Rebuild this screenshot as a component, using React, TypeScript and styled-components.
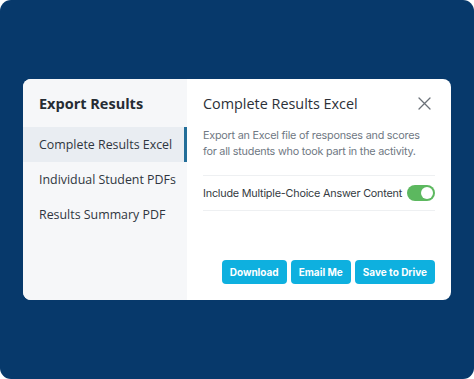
import React from "react";
import styled, { createGlobalStyle } from "styled-components";

const Global = createGlobalStyle`
  html, body { margin: 0; padding: 0; background: #ffffff; }
  * { box-sizing: border-box; }
`;

const Page = styled.div`
  width: 474px;
  height: 379px;
  background: #07396b;
  border-radius: 11px;
  display: flex;
  align-items: center;
  justify-content: center;
`;

const Card = styled.div`
  width: 428px;
  height: 221px;
  background: #ffffff;
  border-radius: 8px;
  overflow: hidden;
  display: flex;
`;

const Sidebar = styled.div`
  width: 164px;
  flex: none;
  background: #f6f7f9;
  display: flex;
  flex-direction: column;
`;

const SideHeader = styled.div`
  height: 48px;
  display: flex;
  align-items: center;
  padding-left: 16px;
  font-family: "Open Sans", sans-serif;
  font-weight: 700;
  font-size: 14.5px;
  color: #262c33;
`;

const SideItem = styled.div<{ $active?: boolean }>`
  height: 35px;
  display: flex;
  align-items: center;
  padding-left: 16px;
  font-family: "Open Sans", sans-serif;
  font-size: 12.4px;
  color: #2f3640;
  background: ${(p) => (p.$active ? "#e9edf2" : "transparent")};
  border-right: 3px solid ${(p) => (p.$active ? "#236e99" : "transparent")};
`;

const Main = styled.div`
  flex: 1;
  display: flex;
  flex-direction: column;
  padding: 0 16px 16px 16px;
`;

const TitleRow = styled.div`
  height: 49px;
  padding-bottom: 1px;
  display: flex;
  align-items: center;
  justify-content: space-between;
`;

const Title = styled.div`
  font-family: "Open Sans", sans-serif;
  font-size: 14.4px;
  color: #2b3038;
`;

const CloseBtn = styled.div`
  width: 16px;
  height: 16px;
  margin-right: 3px;
  display: flex;
  align-items: center;
  justify-content: center;
`;

const Desc = styled.div`
  max-width: 224px;
  font-family: Inter, sans-serif;
  font-size: 10.8px;
  letter-spacing: -0.22px;
  line-height: 16px;
  color: #6f7883;
  margin-bottom: 15px;
`;

const OptionRow = styled.div`
  height: 36px;
  border-top: 1px solid #eef0f2;
  border-bottom: 1px solid #eef0f2;
  display: flex;
  align-items: center;
  justify-content: space-between;
  font-family: Inter, sans-serif;
  font-size: 10.8px;
  letter-spacing: -0.2px;
  color: #343a42;
`;

const Toggle = styled.div<{ $on?: boolean }>`
  width: 28px;
  height: 16px;
  border-radius: 8px;
  background: ${(p) => (p.$on ? "#5cb85f" : "#cfd4da")};
  display: flex;
  align-items: center;
  justify-content: ${(p) => (p.$on ? "flex-end" : "flex-start")};
  padding: 2px;
`;

const Knob = styled.div`
  width: 12px;
  height: 12px;
  border-radius: 50%;
  background: #ffffff;
`;

const Actions = styled.div`
  margin-top: auto;
  display: flex;
  justify-content: flex-end;
  gap: 4px;
`;

const Button = styled.button`
  height: 24px;
  padding: 0 8px;
  border: none;
  border-radius: 4px;
  background: #0eb0df;
  color: #ffffff;
  font-family: Inter, sans-serif;
  font-weight: 700;
  font-size: 10px;
  cursor: pointer;
`;

export default function App() {
  return (
    <>
      <Global />
      <Page>
        <Card>
          <Sidebar>
            <SideHeader>Export Results</SideHeader>
            <SideItem $active>Complete Results Excel</SideItem>
            <SideItem>Individual Student PDFs</SideItem>
            <SideItem>Results Summary PDF</SideItem>
          </Sidebar>
          <Main>
            <TitleRow>
              <Title>Complete Results Excel</Title>
              <CloseBtn>
                <svg width="13" height="13" viewBox="0 0 13 13">
                  <path d="M1 1L12 12M12 1L1 12" stroke="#6b7178" strokeWidth="1.3" strokeLinecap="round" />
                </svg>
              </CloseBtn>
            </TitleRow>
            <Desc>
              Export an Excel file of responses and scores for all students who took part in the activity.
            </Desc>
            <OptionRow>
              <span>Include Multiple-Choice Answer Content</span>
              <Toggle $on>
                <Knob />
              </Toggle>
            </OptionRow>
            <Actions>
              <Button>Download</Button>
              <Button>Email Me</Button>
              <Button>Save to Drive</Button>
            </Actions>
          </Main>
        </Card>
      </Page>
    </>
  );
}
